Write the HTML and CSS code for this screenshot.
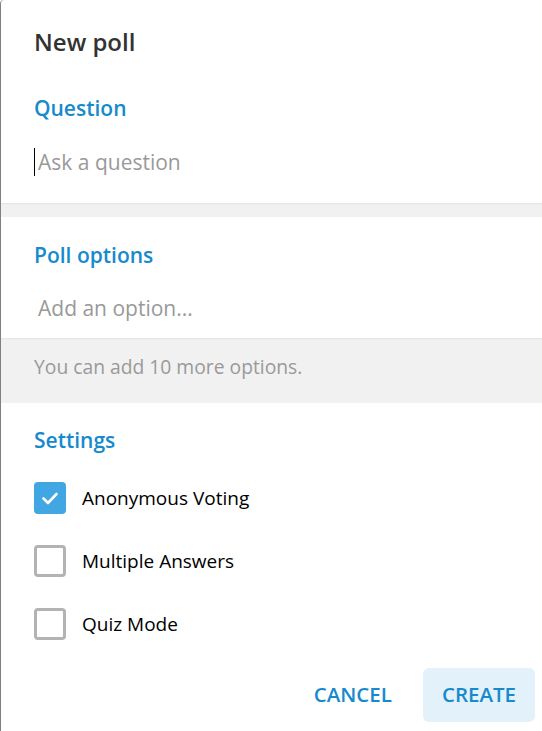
FILE: index.html
```html
<!DOCTYPE html>
<html>
<head>
<meta charset="utf-8">
<link rel="stylesheet" href="styles.css">
</head>
<body>
<div class="dialog">
  <h1 class="title">New poll</h1>
  <section class="block first">
    <h2 class="subtitle">Question</h2>
    <div class="field question"><span class="caret"></span><span class="placeholder">Ask a question</span></div>
  </section>
  <div class="divider"></div>
  <section class="block">
    <h2 class="subtitle">Poll options</h2>
    <div class="field option"><span class="placeholder">Add an option...</span></div>
  </section>
  <div class="about">You can add 10 more options.</div>
  <section class="settings">
    <h2 class="subtitle">Settings</h2>
    <label class="check-row">
      <span class="box checked"><svg viewBox="0 0 32 32" width="32" height="32"><path d="M9.5 16.5l4.5 4.5 8.5-9" fill="none" stroke="#fff" stroke-width="2.6" stroke-linecap="round" stroke-linejoin="round"/></svg></span>
      <span class="label">Anonymous Voting</span>
    </label>
    <label class="check-row">
      <span class="box"></span>
      <span class="label">Multiple Answers</span>
    </label>
    <label class="check-row">
      <span class="box"></span>
      <span class="label">Quiz Mode</span>
    </label>
  </section>
  <div class="buttons">
    <button class="btn">CANCEL</button>
    <button class="btn primary">CREATE</button>
  </div>
</div>
</body>
</html>
```
FILE: styles.css
```css
html, body {
  margin: 0;
  padding: 0;
  background: #ffffff;
}
body {
  width: 542px;
  height: 731px;
  overflow: hidden;
  font-family: "Open Sans", "Liberation Sans", sans-serif;
}
.dialog {
  height: 731px;
  border-left: 1px solid #808080;
  border-top-left-radius: 4px;
  background: #fff;
  display: flex;
  flex-direction: column;
}
.title {
  margin: 0;
  padding: 26px 0 0 33px;
  font-size: 24px;
  font-weight: 600;
  line-height: 32px;
  color: #333333;
}
.subtitle {
  margin: 0;
  font-size: 21px;
  font-weight: 600;
  line-height: 28px;
  color: #168acd;
}
.block {
  padding: 24px 0 0 33px;
}
.block.first {
  padding-top: 36px;
}
.field {
  display: flex;
  align-items: center;
  font-size: 21px;
  line-height: 28px;
  color: #999999;
}
.field.question {
  padding: 26px 0 27px;
}
.field.option {
  padding: 25px 0 16px;
}
.caret {
  width: 1px;
  height: 28px;
  background: #000;
  margin-right: 3px;
}
.option .placeholder {
  padding-left: 4px;
}
.divider {
  height: 14px;
  background: #f1f1f1;
  box-shadow: inset 0 2px 2px -1px rgba(0,0,0,0.06);
}
.about {
  height: 65px;
  background: #f1f1f1;
  box-shadow: inset 0 2px 2px -1px rgba(0,0,0,0.06);
  padding: 16px 0 0 33px;
  font-size: 19.3px;
  line-height: 26px;
  color: #999999;
  box-sizing: border-box;
}
.settings {
  padding: 23px 0 0 33px;
}
.settings .subtitle {
  margin-bottom: 12px;
}
.check-row {
  display: flex;
  align-items: center;
  gap: 16px;
  height: 63px;
}
.box {
  width: 32px;
  height: 32px;
  box-sizing: border-box;
  border: 3px solid #b3b3b3;
  border-radius: 4px;
  display: flex;
  align-items: center;
  justify-content: center;
  flex: none;
}
.box.checked {
  border: none;
  background: #40a7e3;
}
.label {
  font-size: 19px;
  color: #000;
}
.buttons {
  display: flex;
  justify-content: flex-end;
  gap: 12px;
  padding: 13px 7px 0 0;
}
.btn {
  border: none;
  background: transparent;
  font-family: inherit;
  font-size: 20.5px;
  font-weight: 600;
  color: #168acd;
  height: 54px;
  padding: 0 19px 3px;
  border-radius: 6px;
}
.btn.primary {
  background: #e3f1fa;
}
```
